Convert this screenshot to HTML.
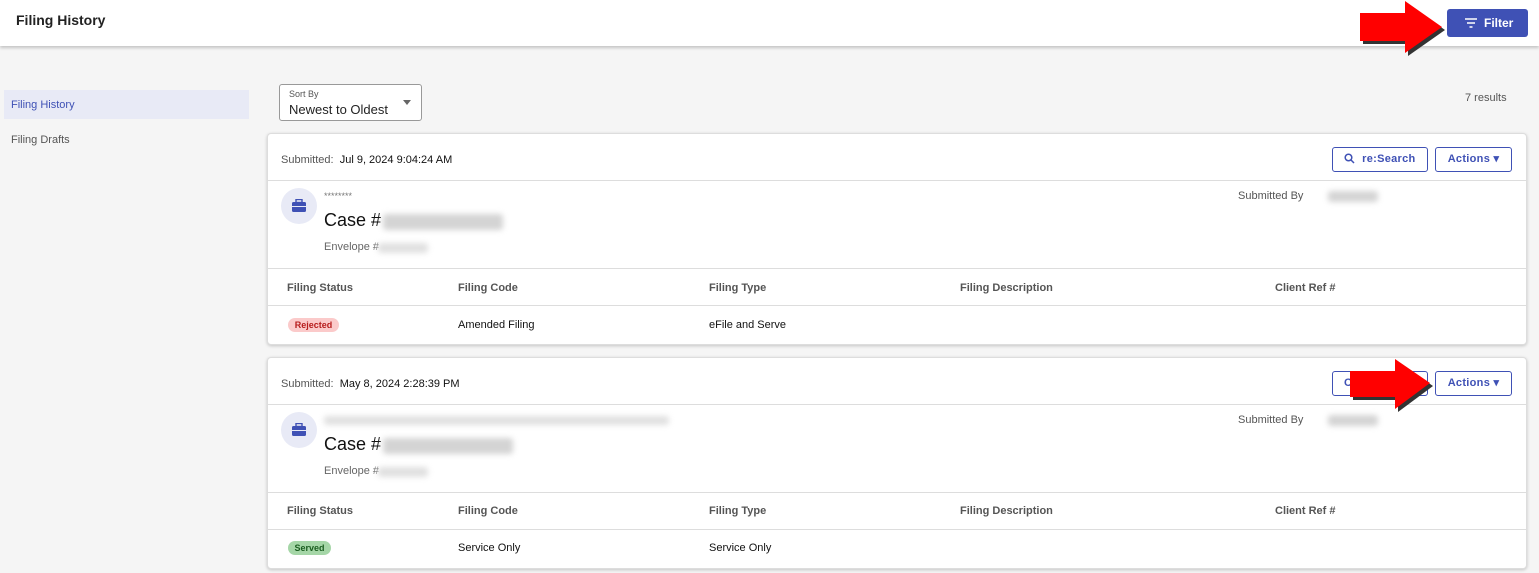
<!DOCTYPE html><html><head><style>
body{margin:0;width:1539px;height:573px;background:#f5f5f5;font-family:"Liberation Sans",sans-serif;position:relative;overflow:hidden;color:#222}
.a{position:absolute}
.top{left:0;top:0;width:1539px;height:46px;background:#fff;box-shadow:0 2px 3px rgba(0,0,0,.2)}
.card{position:absolute;left:267px;width:1258px;background:#fff;border:1px solid #ddd;border-radius:4px;box-shadow:0 1px 3px rgba(0,0,0,.2)}
.line{position:absolute;left:0;right:0;height:1px;background:#ddd}
.btn{position:absolute;height:25px;border:1px solid #3f51b5;border-radius:3px;color:#3f51b5;font-size:11px;font-weight:bold;box-sizing:border-box;line-height:23px;text-align:center;letter-spacing:.3px}
.blur{position:absolute;background:#d4d4d4;filter:blur(3px);border-radius:3px}
.th{position:absolute;font-size:11px;font-weight:bold;color:#555}
.td{position:absolute;font-size:11px;color:#111}
.icon{position:absolute;left:13px;width:36px;height:36px;border-radius:50%;background:#e8eaf6}
</style></head><body>
<div class="a top"></div>
<div class="a" style="left:16px;top:12px;font-size:14px;font-weight:bold">Filing History</div>
<div class="a" style="left:1447px;top:9px;width:81px;height:28px;background:#3f51b5;border-radius:3px;color:#fff;font-size:12px;font-weight:bold;line-height:28px">
<svg class="a" style="left:17px;top:8px" width="14" height="12"><path d="M1 2h12M3 6h8M5.5 10h3" stroke="#fff" stroke-width="1.6"/></svg><span class="a" style="left:37px">Filter</span></div>
<svg class="a" style="left:1355px;top:0" width="95" height="60"><polygon points="8,16 53,16 53,4 90,30 53,56 53,44 8,44" fill="#333"/><polygon points="5,13 50,13 50,1 87,27 50,53 50,41 5,41" fill="#f00"/></svg>
<div class="a" style="left:4px;top:90px;width:245px;height:29px;background:#e8eaf6"></div>
<div class="a" style="left:11px;top:99px;font-size:11px;color:#3f51b5">Filing History</div>
<div class="a" style="left:11px;top:134px;font-size:11px;color:#555">Filing Drafts</div>
<div class="a" style="left:279px;top:84px;width:141px;height:35px;border:1px solid #999;border-radius:3px;background:#fff"></div>
<div class="a" style="left:289px;top:89px;font-size:9px;color:#555">Sort By</div>
<div class="a" style="left:289px;top:102px;font-size:13px">Newest to Oldest</div>
<div class="a" style="left:403px;top:100px;border:4px solid transparent;border-top:5px solid #666"></div>
<div class="a" style="left:1465px;top:92px;font-size:11px;color:#555">7 results</div>

<div class="card" style="top:133px;height:210px">
<div class="a" style="left:13px;top:20px;font-size:11px;color:#555">Submitted:&nbsp; <span style="color:#111">Jul 9, 2024 9:04:24 AM</span></div>
<div class="btn" style="left:1064px;top:13px;width:96px"><svg style="vertical-align:-2px" width="11" height="11"><circle cx="4.5" cy="4.5" r="3.3" stroke="#3f51b5" stroke-width="1.5" fill="none"/><path d="M7 7l3 3" stroke="#3f51b5" stroke-width="1.5"/></svg>&nbsp; re:Search</div>
<div class="btn" style="left:1167px;top:13px;width:77px">Actions ▾</div>
<div class="line" style="top:46px"></div>
<div class="icon" style="top:54px"><svg class="a" style="left:11px;top:11px" width="14" height="13"><rect x="0" y="3" width="14" height="10" rx="1.5" fill="#3f51b5"/><rect x="4" y="0.5" width="6" height="3" fill="none" stroke="#3f51b5" stroke-width="1.4"/><rect x="0" y="7" width="14" height="1" fill="#e8eaf6"/></svg></div>
<div class="a" style="left:56px;top:57px;font-size:9px;color:#777">********</div>
<div class="a" style="left:56px;top:76px;font-size:18px;color:#111">Case #</div>
<div class="blur" style="left:115px;top:80px;width:120px;height:16px"></div>
<div class="a" style="left:56px;top:107px;font-size:11px;color:#666">Envelope #</div>
<div class="blur" style="left:110px;top:109px;width:50px;height:10px;background:#e0e0e0"></div>
<div class="a" style="left:970px;top:56px;font-size:11px;color:#555">Submitted By</div>
<div class="blur" style="left:1060px;top:57px;width:50px;height:11px"></div>
<div class="line" style="top:134px"></div>
<div class="th" style="left:19px;top:148px">Filing Status</div><div class="th" style="left:190px;top:148px">Filing Code</div><div class="th" style="left:441px;top:148px">Filing Type</div><div class="th" style="left:692px;top:148px">Filing Description</div><div class="th" style="left:1007px;top:148px">Client Ref #</div>
<div class="line" style="top:171px"></div>
<div class="a" style="left:20px;top:184px;width:51px;height:14px;border-radius:7px;background:#fbcaca;color:#b71c1c;font-size:9px;font-weight:bold;text-align:center;line-height:14px">Rejected</div>
<div class="td" style="left:190px;top:185px">Amended Filing</div><div class="td" style="left:441px;top:185px">eFile and Serve</div>
</div>

<div class="card" style="top:357px;height:210px">
<div class="a" style="left:13px;top:20px;font-size:11px;color:#555">Submitted:&nbsp; <span style="color:#111">May 8, 2024 2:28:39 PM</span></div>
<div class="btn" style="left:1064px;top:13px;width:96px;text-align:left;padding-left:11px">C</div>
<div class="btn" style="left:1167px;top:13px;width:77px">Actions ▾</div>
<div class="line" style="top:46px"></div>
<div class="icon" style="top:54px"><svg class="a" style="left:11px;top:11px" width="14" height="13"><rect x="0" y="3" width="14" height="10" rx="1.5" fill="#3f51b5"/><rect x="4" y="0.5" width="6" height="3" fill="none" stroke="#3f51b5" stroke-width="1.4"/><rect x="0" y="7" width="14" height="1" fill="#e8eaf6"/></svg></div>
<div class="blur" style="left:56px;top:58px;width:345px;height:9px;background:#e0e0e0"></div>
<div class="a" style="left:56px;top:76px;font-size:18px;color:#111">Case #</div>
<div class="blur" style="left:115px;top:80px;width:130px;height:16px"></div>
<div class="a" style="left:56px;top:107px;font-size:11px;color:#666">Envelope #</div>
<div class="blur" style="left:110px;top:109px;width:50px;height:10px;background:#e0e0e0"></div>
<div class="a" style="left:970px;top:56px;font-size:11px;color:#555">Submitted By</div>
<div class="blur" style="left:1060px;top:57px;width:50px;height:11px"></div>
<div class="line" style="top:134px"></div>
<div class="th" style="left:19px;top:147px">Filing Status</div><div class="th" style="left:190px;top:147px">Filing Code</div><div class="th" style="left:441px;top:147px">Filing Type</div><div class="th" style="left:692px;top:147px">Filing Description</div><div class="th" style="left:1007px;top:147px">Client Ref #</div>
<div class="line" style="top:171px"></div>
<div class="a" style="left:20px;top:183px;width:43px;height:14px;border-radius:7px;background:#a5d6a7;color:#1b5e20;font-size:9px;font-weight:bold;text-align:center;line-height:14px">Served</div>
<div class="td" style="left:190px;top:184px">Service Only</div><div class="td" style="left:441px;top:184px">Service Only</div>
</div>
<svg class="a" style="left:1345px;top:358px" width="95" height="60"><polygon points="8,16 53,16 53,4 88,28 53,54 53,42 8,42" fill="#333"/><polygon points="5,13 50,13 50,1 85,25 50,51 50,39 5,39" fill="#f00"/></svg>
</body></html>
